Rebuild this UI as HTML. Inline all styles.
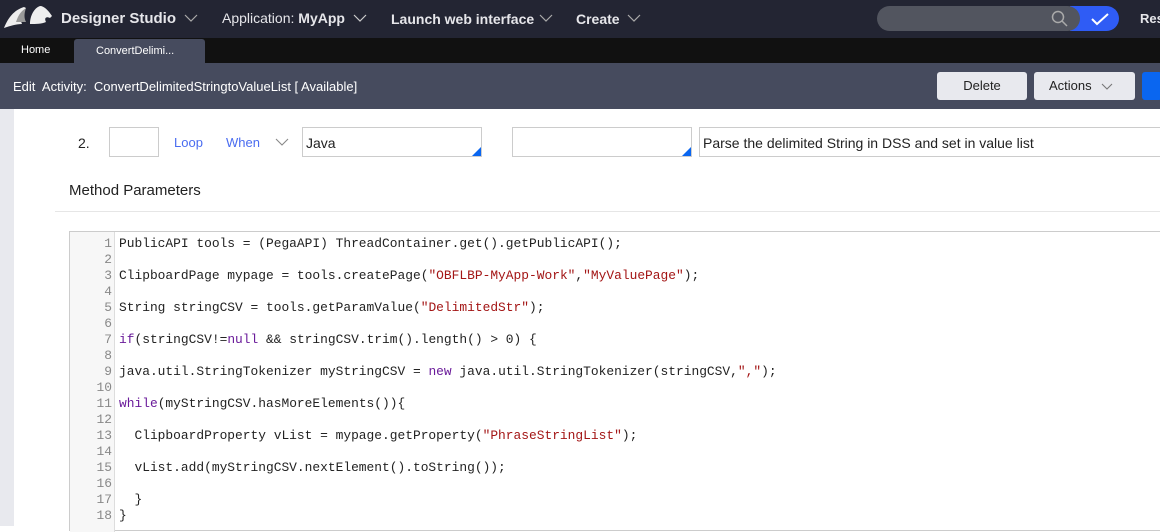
<!DOCTYPE html>
<html><head><meta charset="utf-8"><style>
*{margin:0;padding:0;box-sizing:border-box}
body{width:1160px;height:526px;overflow:hidden;background:#fff;font-family:"Liberation Sans",sans-serif;position:relative}
.a{position:absolute;white-space:nowrap}
.top{left:0;top:0;width:1160px;height:38px;background:#232533;color:#e6e6ea}
.tabs{left:0;top:38px;width:1160px;height:25px;background:#111}
.bar{left:0;top:63px;width:1160px;height:46px;background:#464b5e}
.btn{background:#e8e9ee;border-radius:3px;height:28px;top:72px;font-size:13px;color:#222;text-align:center;line-height:28px}
.code{font-family:"Liberation Mono",monospace;font-size:12.9px;color:#222;white-space:pre}
.ln{font-family:"Liberation Mono",monospace;font-size:12.9px;color:#888;width:30px;text-align:right}
.s{color:#a31515}.k{color:#6a1b9a}
</style></head><body>
<div class="a top"></div>
<svg class="a" style="left:2px;top:4px" width="52" height="26" viewBox="0 0 52 26"><path d="M2 24 C6 14 12 6 22 3 L24 4 C20 10 18 16 20 20 C14 20 8 22 2 24Z" fill="#eee"/><path d="M14 18 C16 12 18 8 24 4 C22 10 22 14 24 18Z" fill="#999"/><path d="M28 20 C28 12 32 4 38 2 C42 2 46 6 50 12 L48 14 C44 12 42 14 44 18 C40 20 34 20 28 20Z" fill="#eee"/></svg>
<div class="a" style="left:61px;top:10px;font-size:15px;font-weight:bold;color:#e6e6ea">Designer Studio</div>
<svg class="a" style="left:184px;top:14px" width="14" height="9"><path d="M1 1L7 7L13 1" stroke="#aaa" stroke-width="1.2" fill="none"/></svg>
<div class="a" style="left:222px;top:10px;font-size:14px;color:#e6e6ea">Application: <b>MyApp</b></div>
<svg class="a" style="left:353px;top:14px" width="14" height="9"><path d="M1 1L7 7L13 1" stroke="#ccc" stroke-width="1.2" fill="none"/></svg>
<div class="a" style="left:391px;top:11px;font-size:14px;font-weight:bold;color:#e6e6ea">Launch web interface</div>
<svg class="a" style="left:539px;top:14px" width="14" height="9"><path d="M1 1L7 7L13 1" stroke="#aaa" stroke-width="1.2" fill="none"/></svg>
<div class="a" style="left:576px;top:11px;font-size:14px;font-weight:bold;color:#e6e6ea">Create</div>
<svg class="a" style="left:627px;top:14px" width="14" height="9"><path d="M1 1L7 7L13 1" stroke="#aaa" stroke-width="1.2" fill="none"/></svg>
<div class="a" style="left:1070px;top:6px;width:49px;height:25px;background:#2f5cf5;border-radius:0 13px 13px 0"></div>
<div class="a" style="left:877px;top:6px;width:203px;height:25px;background:#52555f;border-radius:13px"></div>
<svg class="a" style="left:1051px;top:10px" width="18" height="18"><circle cx="7" cy="7" r="5.5" stroke="#aaa" stroke-width="1.5" fill="none"/><path d="M11 11L16 16" stroke="#aaa" stroke-width="1.5"/></svg>
<svg class="a" style="left:1090px;top:11px" width="20" height="16"><path d="M2 8L7 13L18 3" stroke="#fff" stroke-width="2" fill="none"/></svg>
<div class="a" style="left:1140px;top:11px;font-size:13px;font-weight:bold;color:#e6e6ea">Res</div>
<div class="a tabs"></div>
<div class="a" style="left:21px;top:44px;font-size:11px;color:#fff">Home</div>
<div class="a" style="left:74px;top:39px;width:131px;height:24px;background:#464b5e;border-radius:3px 3px 0 0"></div>
<div class="a" style="left:96px;top:45px;font-size:11px;color:#fff">ConvertDelimi...</div>
<div class="a bar"></div>
<div class="a" style="left:13px;top:79px;font-size:13px;color:#fff">Edit&nbsp; Activity:&nbsp; ConvertDelimitedStringtoValueList [ Available]</div>
<div class="a btn" style="left:937px;width:90px">Delete</div>
<div class="a btn" style="left:1034px;width:101px;text-align:left;padding-left:15px">Actions</div>
<svg class="a" style="left:1101px;top:83px" width="12" height="8"><path d="M1 1L6 6L11 1" stroke="#777" stroke-width="1.1" fill="none"/></svg>
<div class="a" style="left:1142px;top:72px;width:20px;height:28px;background:#0a66f0;border-radius:3px"></div>
<div class="a" style="left:0;top:109px;width:14px;height:417px;background:#e8e9ee"></div>
<div class="a" style="left:78px;top:135px;font-size:14px;color:#222">2.</div>
<div class="a" style="left:109px;top:127px;width:50px;height:30px;border:1px solid #ccc"></div>
<div class="a" style="left:174px;top:135px;font-size:13px;color:#4a6cf0">Loop</div>
<div class="a" style="left:226px;top:135px;font-size:13px;color:#4a6cf0">When</div>
<svg class="a" style="left:275px;top:138px" width="14" height="9"><path d="M1 1L7 7L13 1" stroke="#888" stroke-width="1.1" fill="none"/></svg>
<div class="a" style="left:302px;top:127px;width:180px;height:30px;border:1px solid #ccc"></div>
<div class="a" style="left:306px;top:135px;font-size:14px;color:#222">Java</div>
<div class="a" style="left:472px;top:147px;width:0;height:0;border-left:9px solid transparent;border-bottom:9px solid #0a66f0"></div>
<div class="a" style="left:512px;top:127px;width:180px;height:30px;border:1px solid #ccc"></div>
<div class="a" style="left:682px;top:147px;width:0;height:0;border-left:9px solid transparent;border-bottom:9px solid #0a66f0"></div>
<div class="a" style="left:699px;top:127px;width:470px;height:30px;border:1px solid #ccc"></div>
<div class="a" style="left:703px;top:135px;font-size:14px;color:#222">Parse the delimited String in DSS and set in value list</div>
<div class="a" style="left:69px;top:182px;font-size:15px;color:#222">Method Parameters</div>
<div class="a" style="left:55px;top:211px;width:1105px;height:1px;background:#e6e6e6"></div>
<div class="a" style="left:69px;top:231px;width:1100px;height:300px;border:1px solid #ccc;border-right:none"></div>
<div class="a" style="left:70px;top:232px;width:45px;height:300px;background:#f7f7f7;border-right:1px solid #ddd"></div>
<div class="a" style="left:82px;top:236px;line-height:16px">
<div class="ln">1</div><div class="ln">2</div><div class="ln">3</div><div class="ln">4</div><div class="ln">5</div><div class="ln">6</div><div class="ln">7</div><div class="ln">8</div><div class="ln">9</div><div class="ln">10</div><div class="ln">11</div><div class="ln">12</div><div class="ln">13</div><div class="ln">14</div><div class="ln">15</div><div class="ln">16</div><div class="ln">17</div><div class="ln">18</div>
</div>
<pre class="a code" style="left:119px;top:236px;line-height:16px">PublicAPI tools = (PegaAPI) ThreadContainer.get().getPublicAPI();

ClipboardPage mypage = tools.createPage(<span class="s">"OBFLBP-MyApp-Work"</span>,<span class="s">"MyValuePage"</span>);

String stringCSV = tools.getParamValue(<span class="s">"DelimitedStr"</span>);

<span class="k">if</span>(stringCSV!=<span class="k">null</span> &amp;&amp; stringCSV.trim().length() &gt; 0) {

java.util.StringTokenizer myStringCSV = <span class="k">new</span> java.util.StringTokenizer(stringCSV,<span class="s">","</span>);

<span class="k">while</span>(myStringCSV.hasMoreElements()){

  ClipboardProperty vList = mypage.getProperty(<span class="s">"PhraseStringList"</span>);

  vList.add(myStringCSV.nextElement().toString());

  }
}</pre>
</body></html>
